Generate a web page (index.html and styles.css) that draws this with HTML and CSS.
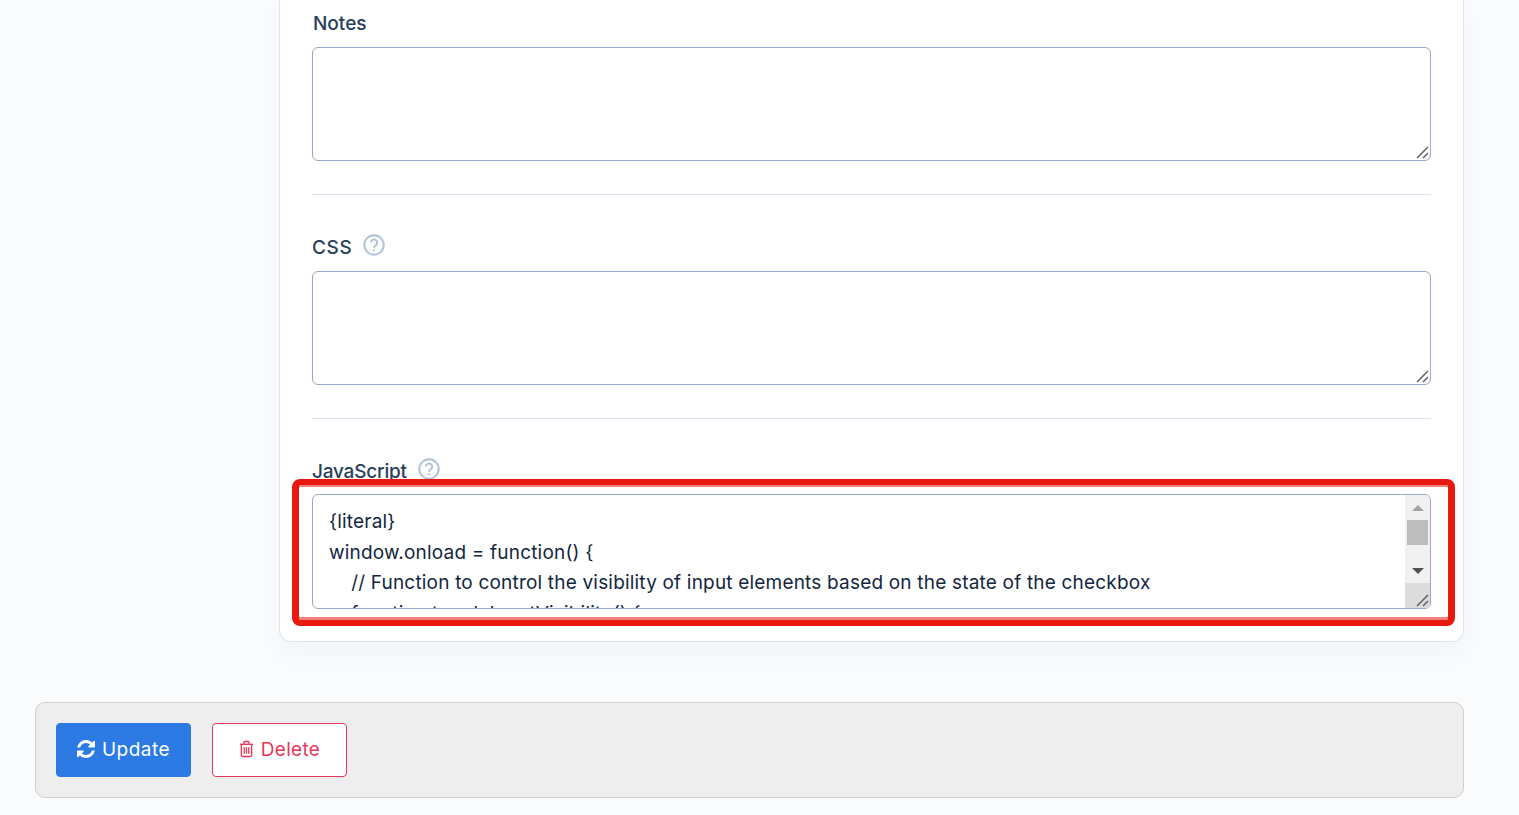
FILE: index.html
```html
<!DOCTYPE html>
<html lang="en">
<head>
<meta charset="utf-8">
<title>Edit</title>
<link rel="stylesheet" href="styles.css">
</head>
<body>
<main class="page">
  <section class="card">
    <div class="field">
      <label class="label label-notes" for="notes">Notes</label>
      <div class="input-wrap">
        <textarea class="input" id="notes"></textarea>
        <svg class="grip" viewBox="0 0 13 13" aria-hidden="true"><path d="M1 12 12 1M7 12l5-5"/></svg>
      </div>
    </div>
    <hr class="rule">
    <div class="field">
      <div class="label-row">
        <label class="label label-css" for="css">CSS</label>
        <svg class="help" viewBox="0 0 22 22" aria-hidden="true"><circle cx="11" cy="11" r="9.7"/><path d="M7.9 8.6a3.1 3.1 0 1 1 4.7 2.7c-1 .6-1.6 1.2-1.6 2.4"/><path d="M11 15.6v1.5"/></svg>
      </div>
      <div class="input-wrap">
        <textarea class="input" id="css"></textarea>
        <svg class="grip" viewBox="0 0 13 13" aria-hidden="true"><path d="M1 12 12 1M7 12l5-5"/></svg>
      </div>
    </div>
    <hr class="rule">
    <div class="field">
      <div class="label-row label-row-js">
        <label class="label label-js" for="js">JavaScript</label>
        <svg class="help" viewBox="0 0 22 22" aria-hidden="true"><circle cx="11" cy="11" r="9.7"/><path d="M7.9 8.6a3.1 3.1 0 1 1 4.7 2.7c-1 .6-1.6 1.2-1.6 2.4"/><path d="M11 15.6v1.5"/></svg>
      </div>
      <div class="input-wrap">
        <textarea class="input input-code" id="js" spellcheck="false">{literal}
window.onload = function() {
    // Function to control the visibility of input elements based on the state of the checkbox
    function toggleInputVisibility() {
        var checkbox = document.getElementById('toggle');
        var inputs = document.querySelectorAll('.toggle-input');
        inputs.forEach(function(input) {
            input.style.display = checkbox.checked ? 'block' : 'none';
        });
    }
    toggleInputVisibility();
    document.getElementById('toggle').addEventListener('change', toggleInputVisibility);
};
{/literal}</textarea>
        <div class="scrollbar" aria-hidden="true">
          <div class="sb-button"><span class="arrow-up"></span></div>
          <div class="sb-track"><div class="sb-thumb"></div></div>
          <div class="sb-button"><span class="arrow-down"></span></div>
          <div class="sb-corner"></div>
        </div>
        <svg class="grip" viewBox="0 0 13 13" aria-hidden="true"><path d="M1 12 12 1M7 12l5-5"/></svg>
      </div>
    </div>
    <div class="highlight"></div>
  </section>
  <footer class="actions">
    <button class="btn btn-primary" type="button">
      <svg class="icon-refresh" viewBox="0 0 1536 1536" aria-hidden="true"><path d="M1511 928q0 5-1 7-64 268-268 434.5t-478 166.5q-146 0-282.5-55t-243.5-157l-129 129q-19 19-45 19t-45-19-19-45v-448q0-26 19-45t45-19h448q26 0 45 19t19 45-19 45l-137 137q71 66 161 102t187 36q134 0 250-65t186-179q11-17 53-117 8-23 30-23h192q13 0 22.5 9.5t9.5 22.5zm25-800v448q0 26-19 45t-45 19h-448q-26 0-45-19t-19-45 19-45l138-138q-148-137-349-137-134 0-250 65t-186 179q-11 17-53 117-8 23-30 23h-199q-13 0-22.5-9.5t-9.5-22.5v-7q65-268 270-434.5t480-166.5q146 0 284 55.5t245 156.5l130-129q19-19 45-19t45 19 19 45z"/></svg>
      <span class="btn-text">Update</span>
    </button>
    <button class="btn btn-danger" type="button">
      <svg class="icon-trash" viewBox="0 0 16 18" aria-hidden="true"><path d="M1 4h14"/><path d="M5.2 4V2.2C5.2 1.5 5.7 1 6.4 1h3.2c.7 0 1.2.5 1.2 1.2V4"/><path d="M2.5 4v11.3c0 1 .7 1.7 1.7 1.7h7.6c1 0 1.7-.7 1.7-1.7V4"/><path d="M5.6 7v7M8 7v7M10.4 7v7"/></svg>
      <span class="btn-text">Delete</span>
    </button>
  </footer>
</main>
</body>
</html>
```
FILE: styles.css
```css
* { box-sizing: border-box; }
html, body { margin: 0; padding: 0; }
body {
  background: #f9fbfd;
  color: #283e59;
  font-family: "Inter", "Liberation Sans", sans-serif;
  font-size: 20px;
  overflow: hidden;
  height: 815px;
}
.page { padding: 0 55px 0 35px; }
.card {
  position: relative;
  margin-left: 244px;
  height: 642px;
  padding: 0 32px;
  background: #fff;
  border: 1px solid #dbe4f0;
  border-top: 0;
  border-radius: 0 0 12px 12px;
  box-shadow: 0 12px 24px rgba(18, 38, 63, .03);
}
.field { display: flex; flex-direction: column; }
.label { display: block; font-size: 19px; font-weight: 500; line-height: 24px; color: #283e59; }
.label-notes { margin-top: 12px; margin-bottom: 11px; margin-left: 1px; }
.label-css { letter-spacing: .6px; }
.label-js { letter-spacing: -.2px; }
.label-row { display: flex; align-items: center; gap: 11px; height: 24px; margin-top: 41px; margin-bottom: 11px; }
.label-row-js { margin-bottom: 10px; }
.help { width: 22px; height: 22px; margin-top: -7px; fill: none; stroke: #b1c2d9; stroke-width: 2; }
.input-wrap { position: relative; }
.input {
  display: block;
  width: 100%;
  height: 114px;
  padding: 12px 16px;
  background: #fff;
  border: 1px solid #95aac9;
  border-radius: 6px;
  color: #12263f;
  font-family: inherit;
  font-size: 19px;
  letter-spacing: .19px;
  line-height: 30.5px;
  outline: 0;
  resize: none;
}
.input-code { height: 115px; overflow: hidden; }
.grip { position: absolute; right: 2px; bottom: 2px; width: 13px; height: 13px; fill: none; stroke: #666; stroke-width: 1.6; }
.scrollbar {
  position: absolute;
  top: 1px;
  right: 1px;
  bottom: 1px;
  display: flex;
  flex-direction: column;
  width: 25px;
  overflow: hidden;
  background: #f1f1f1;
  border-radius: 0 5px 5px 0;
}
.sb-button { display: flex; flex: 0 0 25px; align-items: center; justify-content: center; }
.arrow-up { border: solid transparent; border-width: 0 6px 6px; border-bottom-color: #a3a3a3; }
.arrow-down { border: solid transparent; border-width: 6px 6px 0; border-top-color: #505050; }
.sb-track { flex: 1; padding: 0 2px; }
.sb-thumb { height: 25px; background: #bdbdbd; }
.sb-corner { flex: 0 0 25px; background: #dcdcdc; }
.rule { height: 1px; margin: 33px 0 0; border: 0; background: #d9e4f0; }
.highlight {
  position: absolute;
  left: 12px;
  right: 8px;
  top: 479px;
  height: 147px;
  border: solid #e8190f;
  border-width: 6px 7.5px;
  border-radius: 8px;
  box-shadow: inset 0 2px 0 #f08078, inset 0 -3px 0 #f08078;
  pointer-events: none;
}
.actions {
  display: flex;
  gap: 21px;
  height: 96px;
  margin-top: 60px;
  padding: 20px;
  background: #eee;
  border: 1px solid #cfcfcf;
  border-radius: 10px;
}
.btn {
  display: flex;
  align-items: center;
  justify-content: center;
  gap: 7px;
  width: 135px;
  height: 54px;
  padding: 0 0 2px;
  border-radius: 4px;
  font-family: inherit;
  font-size: 19px;
  letter-spacing: .5px;
}
.btn-primary { background: #2c7be5; border: 1px solid #2c7be5; color: #fff; }
.btn-danger { background: #fff; border: 1px solid #e63757; color: #e63757; letter-spacing: .3px; }
.icon-refresh { width: 18px; height: 18px; fill: #fff; }
.icon-trash { width: 15px; height: 18px; fill: none; stroke: #e63757; stroke-width: 1.4; }
```
